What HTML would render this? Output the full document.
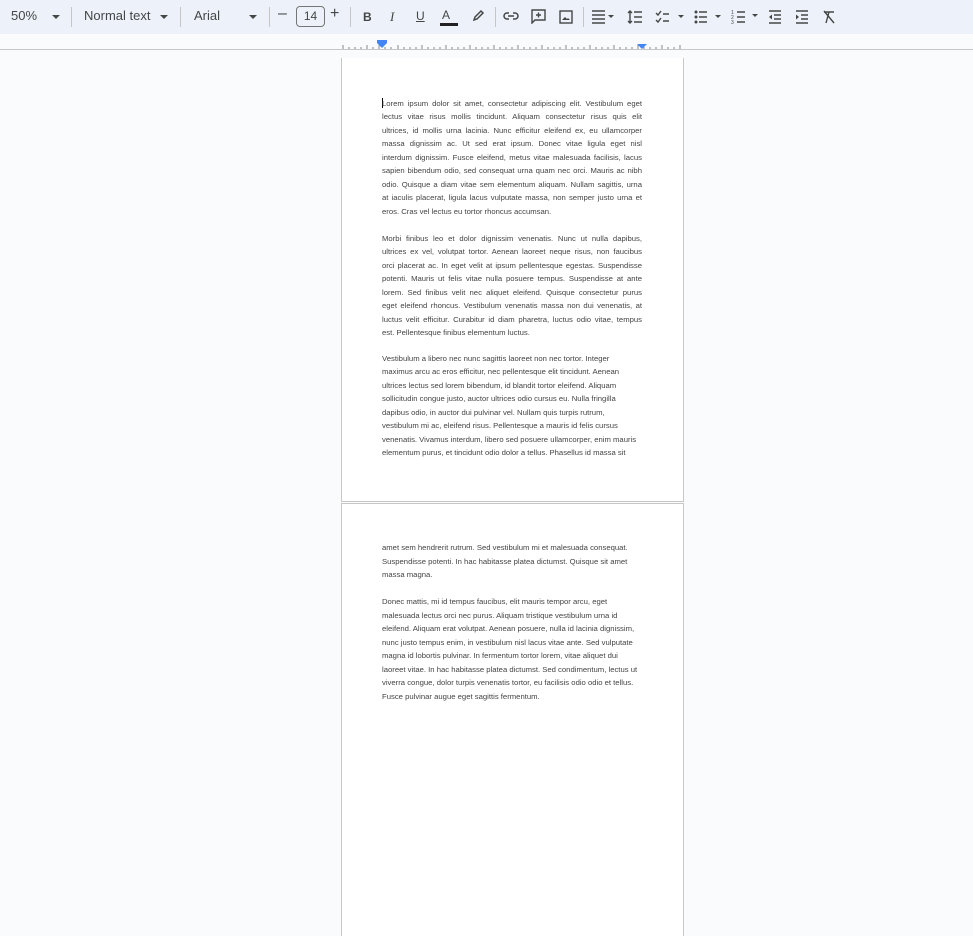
<!DOCTYPE html>
<html style="overflow:hidden;height:936px"><head><meta charset="utf-8"><style>
*{margin:0;padding:0;box-sizing:border-box}
body{width:973px;height:936px;overflow:hidden;background:#f9fbfd;font-family:"Liberation Sans",Arial,sans-serif;position:relative}
.tb{position:absolute;left:0;top:0;width:973px;height:34px;background:#edf2fa;color:#444746;font-size:13px}
.tb span{position:absolute;top:8px}
.sep{position:absolute;top:7px;width:1px;height:20px;background:#c4c7c5}
.caret{position:absolute;top:15px;width:0;height:0;border-left:4px solid transparent;border-right:4px solid transparent;border-top:4px solid #444746}
.ruler{position:absolute;top:34px;left:0;width:973px;height:16px;border-bottom:1px solid #c7c7c7;background:#f9fbfd}
.page{position:absolute;left:341px;width:343px;background:#fff;border:1px solid #c7c7c7}
.txt{position:absolute;left:382px;width:260px;font-size:7.7px;color:#444;line-height:13.5px}
.j div{text-align:justify;text-align-last:justify;white-space:nowrap}
.j div.l{text-align-last:left}
.n div{white-space:nowrap}
.b{height:13.5px}
svg{position:absolute}
</style></head><body>
<div class="tb">
<span style="left:11px">50%</span><div class="caret" style="left:52px"></div>
<div class="sep" style="left:71px"></div>
<span style="left:84px">Normal text</span><div class="caret" style="left:160px"></div>
<div class="sep" style="left:180px"></div>
<span style="left:194px">Arial</span><div class="caret" style="left:249px"></div>
<div class="sep" style="left:269px"></div>
<span style="left:278px;top:5px;font-size:16px">–</span>
<div style="position:absolute;left:296px;top:6px;width:29px;height:21px;border:1px solid #747775;border-radius:4px;text-align:center;line-height:19px;font-size:12px">14</div>
<span style="left:330px;top:5px;font-size:16px">+</span>
<div class="sep" style="left:350px"></div>
<span style="left:363px;font-weight:bold;font-size:12px;top:10px">B</span>
<span style="left:390px;font-style:italic;font-size:13px;top:9px;font-family:'Liberation Serif'">I</span>
<span style="left:416px;text-decoration:underline;font-size:12px;top:9px">U</span>
<span style="left:442px;font-size:12px;top:8px">A</span><div style="position:absolute;left:440px;top:23px;width:18px;height:3px;background:#222"></div>
<svg style="left:471px;top:9px" width="14" height="14" viewBox="0 0 14 14"><path d="M3 11l1-3 6-6 2 2-6 6z" fill="none" stroke="#444746" stroke-width="1.5"/></svg>
<div class="sep" style="left:495px"></div>
<svg style="left:503px;top:10px" width="16" height="12" viewBox="0 0 16 12"><path d="M6 3H4a3 3 0 000 6h2M10 3h2a3 3 0 010 6h-2M5 6h6" fill="none" stroke="#444746" stroke-width="1.5"/></svg>
<svg style="left:531px;top:9px" width="15" height="15" viewBox="0 0 15 15"><path d="M1 1h13v10H4l-3 3zM7.5 3.5v5M5 6h5" fill="none" stroke="#444746" stroke-width="1.4"/></svg>
<svg style="left:559px;top:10px" width="14" height="14" viewBox="0 0 14 14"><rect x="1" y="1" width="12" height="12" fill="none" stroke="#444746" stroke-width="1.4"/><path d="M3 10l3-3 2 2 1-1 2 2z" fill="#444746"/></svg>
<div class="sep" style="left:583px"></div>
<svg style="left:592px;top:10px" width="24" height="14" viewBox="0 0 24 14"><path d="M0 1h13M0 5h13M0 9h13M0 13h13" stroke="#444746" stroke-width="1.4"/><path d="M16 5h6l-3 3z" fill="#444746"/></svg>
<svg style="left:627px;top:10px" width="16" height="14" viewBox="0 0 16 14"><path d="M3 1v12M1 3l2-2 2 2M1 11l2 2 2-2M7 2h8M7 7h8M7 12h8" fill="none" stroke="#444746" stroke-width="1.4"/></svg>
<svg style="left:655px;top:10px" width="30" height="14" viewBox="0 0 30 14"><path d="M1 3l2 2 3-4M1 10l2 2 3-4M8 4h6M8 11h6" fill="none" stroke="#444746" stroke-width="1.4"/><path d="M23 5h6l-3 3z" fill="#444746"/></svg>
<svg style="left:694px;top:10px" width="30" height="14" viewBox="0 0 30 14"><circle cx="2" cy="2" r="1.5" fill="#444746"/><circle cx="2" cy="7" r="1.5" fill="#444746"/><circle cx="2" cy="12" r="1.5" fill="#444746"/><path d="M5 2h8M5 7h8M5 12h8" stroke="#444746" stroke-width="1.4"/><path d="M21 5h6l-3 3z" fill="#444746"/></svg>
<svg style="left:731px;top:9px" width="30" height="15" viewBox="0 0 30 15"><path d="M6 3h8M6 8h8M6 13h8" stroke="#444746" stroke-width="1.4"/><text x="0" y="5" font-size="5" fill="#444746">1</text><text x="0" y="10" font-size="5" fill="#444746">2</text><text x="0" y="15" font-size="5" fill="#444746">3</text><path d="M21 5h6l-3 3z" fill="#444746"/></svg>
<svg style="left:768px;top:10px" width="14" height="14" viewBox="0 0 14 14"><path d="M1 1h12M6 5h7M6 9h7M1 13h12" stroke="#444746" stroke-width="1.4"/><path d="M4 4.5v5L1 7z" fill="#444746"/></svg>
<svg style="left:795px;top:10px" width="14" height="14" viewBox="0 0 14 14"><path d="M1 1h12M6 5h7M6 9h7M1 13h12" stroke="#444746" stroke-width="1.4"/><path d="M1 4.5v5L4 7z" fill="#444746"/></svg>
<svg style="left:822px;top:10px" width="14" height="14" viewBox="0 0 14 14"><path d="M2 1l10 12M2 2h10M7 2l-3 11" fill="none" stroke="#444746" stroke-width="1.4"/></svg>
</div>
<div class="ruler">
<svg style="left:342px;top:0" width="344" height="16"><g stroke="#888" stroke-width="1">
<path d="M1 11v4M7 13v2M13 13v2M19 13v2M25 11v4M31 13v2M37 11v4M43 13v2M49 13v2M56 11v4M62 13v2M68 13v2M74 13v2M80 11v4M86 13v2M92 13v2M98 13v2M104 11v4M110 13v2M116 13v2M122 13v2M128 11v4M134 13v2M140 13v2M146 13v2M152 11v4M158 13v2M164 13v2M170 13v2M176 11v4M182 13v2M188 13v2M194 13v2M200 11v4M206 13v2M212 13v2M218 13v2M224 11v4M230 13v2M236 13v2M242 13v2M248 11v4M254 13v2M260 13v2M266 13v2M272 11v4M278 13v2M284 13v2M290 13v2M296 11v4M302 13v2M308 13v2M314 13v2M320 11v4M326 13v2M332 13v2M338 11v4"/></g>
<path d="M35 9h10l-5 5z" fill="#4285f4"/><rect x="35" y="6" width="10" height="3" fill="#4285f4"/><path d="M295 10h10l-5 5z" fill="#4285f4"/></svg>
</div>
<div class="page" style="top:58px;height:444px;border-top:none"></div>
<div class="page" style="top:503px;height:433px;border-bottom:none"></div>
<div style="position:absolute;left:382px;top:98px;width:1px;height:10px;background:#000"></div>
<div class="txt j" style="top:96.5px">
<div>Lorem ipsum dolor sit amet, consectetur adipiscing elit. Vestibulum eget</div>
<div>lectus vitae risus mollis tincidunt. Aliquam consectetur risus quis elit</div>
<div>ultrices, id mollis urna lacinia. Nunc efficitur eleifend ex, eu ullamcorper</div>
<div>massa dignissim ac. Ut sed erat ipsum. Donec vitae ligula eget nisl</div>
<div>interdum dignissim. Fusce eleifend, metus vitae malesuada facilisis, lacus</div>
<div>sapien bibendum odio, sed consequat urna quam nec orci. Mauris ac nibh</div>
<div>odio. Quisque a diam vitae sem elementum aliquam. Nullam sagittis, urna</div>
<div>at iaculis placerat, ligula lacus vulputate massa, non semper justo urna et</div>
<div class="l">eros. Cras vel lectus eu tortor rhoncus accumsan.</div>
<div class="b"></div>
<div>Morbi finibus leo et dolor dignissim venenatis. Nunc ut nulla dapibus,</div>
<div>ultrices ex vel, volutpat tortor. Aenean laoreet neque risus, non faucibus</div>
<div>orci placerat ac. In eget velit at ipsum pellentesque egestas. Suspendisse</div>
<div>potenti. Mauris ut felis vitae nulla posuere tempus. Suspendisse at ante</div>
<div>lorem. Sed finibus velit nec aliquet eleifend. Quisque consectetur purus</div>
<div>eget eleifend rhoncus. Vestibulum venenatis massa non dui venenatis, at</div>
<div>luctus velit efficitur. Curabitur id diam pharetra, luctus odio vitae, tempus</div>
<div class="l">est. Pellentesque finibus elementum luctus.</div>
<div class="b"></div>
</div>
<div class="txt n" style="top:351.5px">
<div>Vestibulum a libero nec nunc sagittis laoreet non nec tortor. Integer</div>
<div>maximus arcu ac eros efficitur, nec pellentesque elit tincidunt. Aenean</div>
<div>ultrices lectus sed lorem bibendum, id blandit tortor eleifend. Aliquam</div>
<div>sollicitudin congue justo, auctor ultrices odio cursus eu. Nulla fringilla</div>
<div>dapibus odio, in auctor dui pulvinar vel. Nullam quis turpis rutrum,</div>
<div>vestibulum mi ac, eleifend risus. Pellentesque a mauris id felis cursus</div>
<div>venenatis. Vivamus interdum, libero sed posuere ullamcorper, enim mauris</div>
<div>elementum purus, et tincidunt odio dolor a tellus. Phasellus id massa sit</div>
</div>
<div class="txt n" style="top:541px">
<div>amet sem hendrerit rutrum. Sed vestibulum mi et malesuada consequat.</div>
<div>Suspendisse potenti. In hac habitasse platea dictumst. Quisque sit amet</div>
<div>massa magna.</div>
<div class="b"></div>
<div>Donec mattis, mi id tempus faucibus, elit mauris tempor arcu, eget</div>
<div>malesuada lectus orci nec purus. Aliquam tristique vestibulum urna id</div>
<div>eleifend. Aliquam erat volutpat. Aenean posuere, nulla id lacinia dignissim,</div>
<div>nunc justo tempus enim, in vestibulum nisl lacus vitae ante. Sed vulputate</div>
<div>magna id lobortis pulvinar. In fermentum tortor lorem, vitae aliquet dui</div>
<div>laoreet vitae. In hac habitasse platea dictumst. Sed condimentum, lectus ut</div>
<div>viverra congue, dolor turpis venenatis tortor, eu facilisis odio odio et tellus.</div>
<div>Fusce pulvinar augue eget sagittis fermentum.</div>
</div>
</body></html>
